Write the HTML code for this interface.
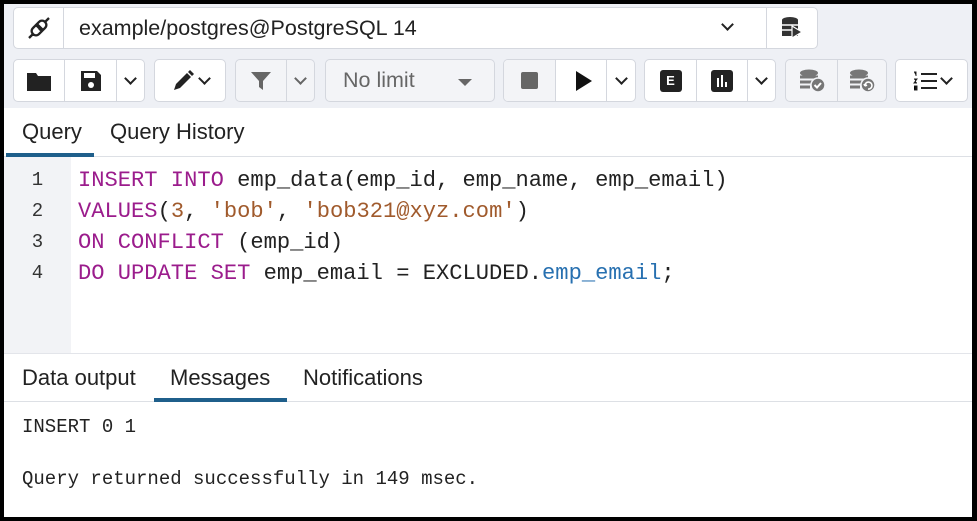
<!DOCTYPE html>
<html><head><meta charset="utf-8"><style>
*{box-sizing:border-box;margin:0;padding:0}
body{width:977px;height:521px;background:#000;position:relative;overflow:hidden;font-family:"Liberation Sans",sans-serif}
#app{position:absolute;left:4px;top:4px;width:968px;height:513px;background:#fff;overflow:hidden}
#hdr{position:absolute;left:0;top:0;width:968px;height:104px;background:#eef0f5}
.box{position:absolute;background:#fff;border:1px solid #d4d7de;border-radius:5px;display:flex;overflow:hidden}
.box>div{border-right:1px solid #d4d7de;display:flex;align-items:center;justify-content:center;height:100%}
.box>div:last-child{border-right:none}
.gray{background:#f3f4f7}
.chev{width:9px;height:9px;border-right:2px solid #222;border-bottom:2px solid #222;transform:rotate(45deg);margin-top:-5px}
.tab{position:absolute;font-size:22px;color:#222}
.mono{font-family:"Liberation Mono",monospace}
.code{position:absolute;left:74px;font-size:22.1px;line-height:31px;white-space:pre;color:#222}
.k{color:#9b1c8c}.s{color:#a05a2c}.b{color:#2770b0}
.ln{position:absolute;left:0;width:67px;text-align:center;font-size:19px;color:#333;line-height:31px}
</style></head><body><div id="app">
<div id="hdr"></div>
<div class="box" style="left:9px;top:3px;width:805px;height:42px">
 <div style="width:50px"><svg width="26" height="26" viewBox="0 0 26 26" fill="none" stroke="#222" stroke-width="2.3"><path d="M3 23l4-4M23 3l-4 4M7 19a4 4 0 0 1 0-6l4-4 6 6-4 4a4 4 0 0 1-6 0zM19 7a4 4 0 0 1 0 6l-3 3-6-6 3-3a4 4 0 0 1 6 0zM9 11l2-2M13 15l2-2"/></svg></div>
 <div style="flex:1;justify-content:flex-start;padding-left:15px;font-size:21.5px;color:#222;position:relative">example/postgres@PostgreSQL 14<span class="chev" style="position:absolute;right:34px;top:17px"></span></div>
 <div style="width:50px"><svg width="24" height="24" viewBox="0 0 24 24"><ellipse cx="10" cy="4" rx="8" ry="3" fill="#333"/><rect x="2" y="4" width="16" height="16" fill="#333"/><path d="M2 9h16M2 14h16" stroke="#fff" stroke-width="1.5"/><path d="M12 10l10 6-10 6z" fill="#333" stroke="#fff" stroke-width="1.2"/></svg></div>
</div>
<div class="box" style="left:9px;top:55px;width:132px;height:43px">
 <div style="width:51px"><svg width="24" height="20" viewBox="0 0 24 20"><path d="M0 2h9l2 3h13v15H0z" fill="#222"/></svg></div>
 <div style="width:52px"><svg width="22" height="22" viewBox="0 0 22 22"><path d="M1 1h16l4 4v16H1z" fill="#222"/><rect x="4" y="3" width="11" height="5" fill="#fff"/><circle cx="11" cy="15" r="3" fill="#fff"/></svg></div>
 <div style="flex:1"><span class="chev"></span></div>
</div>
<div class="box" style="left:150px;top:55px;width:72px;height:43px">
 <div style="flex:1;gap:6px"><svg width="22" height="22" viewBox="0 0 22 22"><path d="M2 20l2-6L15 3l4 4L8 18z" fill="#222"/><path d="M16 2l2-2 4 4-2 2z" fill="#222"/></svg><span class="chev"></span></div>
</div>
<div class="box gray" style="left:231px;top:55px;width:80px;height:43px">
 <div style="width:51px"><svg width="20" height="20" viewBox="0 0 20 20"><path d="M0 1h20l-8 9v9l-4-3v-6z" fill="#666"/></svg></div>
 <div style="flex:1"><span class="chev" style="border-color:#666"></span></div>
</div>
<div class="box gray" style="left:321px;top:55px;width:170px;height:43px">
 <div style="flex:1;justify-content:flex-start;padding-left:17px;font-size:21.5px;color:#666;position:relative">No limit<span style="position:absolute;right:22px;top:19px;border:7px solid transparent;border-top:7px solid #666;border-bottom:none"></span></div>
</div>
<div class="box" style="left:499px;top:55px;width:133px;height:43px">
 <div style="width:52px" class="gray"><span style="width:17px;height:17px;background:#666;border-radius:2px"></span></div>
 <div style="width:51px"><span style="border:10px solid transparent;border-left:16px solid #111;border-right:none;margin-left:6px"></span></div>
 <div style="flex:1"><span class="chev"></span></div>
</div>
<div class="box" style="left:640px;top:55px;width:132px;height:43px">
 <div style="width:52px"><span style="width:22px;height:22px;background:#222;border-radius:3px;color:#fff;font-size:13px;font-weight:bold;display:flex;align-items:center;justify-content:center">E</span></div>
 <div style="width:51px"><svg width="22" height="22" viewBox="0 0 22 22"><rect width="22" height="22" rx="3" fill="#222"/><path d="M7 8v9M11 5v12M15 12v5" stroke="#fff" stroke-width="2"/></svg></div>
 <div style="flex:1"><span class="chev"></span></div>
</div>
<div class="box gray" style="left:781px;top:55px;width:102px;height:43px">
 <div style="width:52px"><svg width="28" height="24" viewBox="0 0 28 24"><ellipse cx="11" cy="4" rx="9" ry="3.5" fill="#777"/><path d="M2 8h18M2 13h12M2 18h10" stroke="#777" stroke-width="3"/><circle cx="20" cy="16" r="7" fill="#777" stroke="#f3f4f7" stroke-width="1.5"/><path d="M16.5 16l2.5 2.5 4-4.5" stroke="#fff" stroke-width="2" fill="none"/></svg></div>
 <div style="flex:1"><svg width="28" height="24" viewBox="0 0 28 24"><ellipse cx="11" cy="4" rx="9" ry="3.5" fill="#777"/><path d="M2 8h18M2 13h12M2 18h10" stroke="#777" stroke-width="3"/><circle cx="20" cy="16" r="7" fill="#777" stroke="#f3f4f7" stroke-width="1.5"/><path d="M17 17a3.5 3.5 0 1 1 3 3M17 17l-1-2M17 17l2-1" stroke="#fff" stroke-width="1.6" fill="none"/></svg></div>
</div>
<div class="box" style="left:891px;top:55px;width:73px;height:43px">
 <div style="flex:1;gap:5px"><svg width="24" height="20" viewBox="0 0 24 20"><path d="M8 3h16M8 10h16M8 17h16" stroke="#222" stroke-width="2"/><path d="M1 1h2v4M1 8h3l-3 4h3M1 15h3v4H1M2 17h2" stroke="#222" stroke-width="1"/></svg><span class="chev"></span></div>
</div>
<div class="tab" style="left:18px;top:115px">Query</div>
<div class="tab" style="left:106px;top:115px">Query History</div>
<div style="position:absolute;left:0;top:152px;width:968px;height:1px;background:#dde0e5"></div>
<div style="position:absolute;left:2px;top:149px;width:88px;height:4px;background:#1f5f8b"></div>
<div style="position:absolute;left:0;top:153px;width:67px;height:196px;background:#f2f3f6"></div>
<div class="ln mono" style="top:161px">1<br>2<br>3<br>4</div>
<div class="code mono" style="top:161px"><span class="k">INSERT INTO</span> emp_data(emp_id, emp_name, emp_email)
<span class="k">VALUES</span>(<span class="s">3</span>, <span class="s">'bob'</span>, <span class="s">'bob321@xyz.com'</span>)
<span class="k">ON CONFLICT</span> (emp_id)
<span class="k">DO UPDATE SET</span> emp_email = EXCLUDED.<span class="b">emp_email</span>;</div>
<div style="position:absolute;left:0;top:349px;width:968px;height:1px;background:#e3e5ea"></div>
<div class="tab" style="left:18px;top:361px">Data output</div>
<div class="tab" style="left:166px;top:361px">Messages</div>
<div class="tab" style="left:299px;top:361px">Notifications</div>
<div style="position:absolute;left:0;top:397px;width:968px;height:1px;background:#dde0e5"></div>
<div style="position:absolute;left:150px;top:394px;width:133px;height:4px;background:#1f5f8b"></div>
<div class="mono" style="position:absolute;left:18px;top:410px;font-size:19px;color:#222;line-height:26px;white-space:pre">INSERT 0 1

Query returned successfully in 149 msec.</div>
</div></body></html>
